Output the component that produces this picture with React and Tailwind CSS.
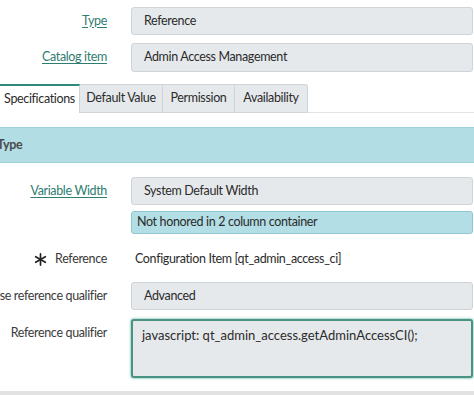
import React from "react";

const font = { fontFamily: '"Source Sans Pro", Lato, "Noto Sans", sans-serif' };

function Label({ children, link }) {
  return (
    <div className="w-[107px] shrink-0 flex justify-end whitespace-nowrap">
      <span
        className={
          link
            ? "text-[#2e7d71] underline underline-offset-2 decoration-[#2e7d71]"
            : "text-[#3a3a3a]"
        }
      >
        {children}
      </span>
    </div>
  );
}

function Input({ children, h = "h-[28px]" }) {
  return (
    <div
      className={`flex-1 ${h} ml-[24px] mr-[1px] rounded-[3px] border border-[#cfd4d8] bg-[#e6e9ec] flex items-center pl-[12px] text-[#2b2b2b]`}
    >
      {children}
    </div>
  );
}

export default function App() {
  return (
    <div
      className="w-[474px] h-[395px] overflow-hidden bg-white text-[12.5px] tracking-[-0.35px] relative"
      style={font}
    >
      <div className="flex flex-col">
        <div className="flex items-center mt-[7px]">
          <Label link>Type</Label>
          <Input>Reference</Input>
        </div>
        <div className="flex items-center mt-[8px]">
          <Label link>Catalog item</Label>
          <Input h="h-[29px]">Admin Access Management</Input>
        </div>

        {/* tabs */}
        <div className="flex mt-[12px] h-[29px] items-stretch">
          <div className="w-[80px] border-t-2 border-t-[#2f8a78] border-r border-r-[#cfd4d8] bg-white flex items-center justify-center text-[#2b2b2b]">
            Specifications
          </div>
          <div className="w-[83px] border-t border-t-[#cfd4d8] border-r border-r-[#cfd4d8] border-b border-b-[#d3d6d9] bg-[#e6e9ec] flex items-center justify-center text-[#2b2b2b]">
            Default Value
          </div>
          <div className="w-[72px] border-t border-t-[#cfd4d8] border-r border-r-[#cfd4d8] border-b border-b-[#d3d6d9] bg-[#e6e9ec] flex items-center justify-center text-[#2b2b2b]">
            Permission
          </div>
          <div className="w-[73px] border-t border-t-[#cfd4d8] border-r border-r-[#cfd4d8] border-b border-b-[#d3d6d9] bg-[#e6e9ec] rounded-tr-[3px] flex items-center justify-center text-[#2b2b2b]">
            Availability
          </div>
          <div className="flex-1 border-b border-b-[#e3e3e3]" />
        </div>

        {/* section header */}
        <div className="mt-[14px] h-[36px] bg-[#b2dde4] border-y border-[#9fd0d8] flex items-center">
          <span className="ml-[-3px] font-bold text-[#4a4a4a]">Type</span>
        </div>

        <div className="flex items-center mt-[14px]">
          <Label link>Variable Width</Label>
          <Input>System Default Width</Input>
        </div>
        <div className="flex mt-[6px]">
          <div className="w-[107px] shrink-0" />
          <div className="flex-1 ml-[24px] mr-[1px] h-[23px] rounded-[3px] border border-[#8fc8d1] bg-[#b3dee5] flex items-center pl-[5px] text-[#2b2b2b]">
            Not honored in 2 column container
          </div>
        </div>

        <div className="flex items-center mt-[16px] h-[18px]">
          <div className="w-[107px] shrink-0 flex justify-end items-center whitespace-nowrap text-[#3a3a3a]">
            <svg width="13" height="13" viewBox="0 0 14 14" className="mr-[8px]">
              <g stroke="#222" strokeWidth="1.8" strokeLinecap="round">
                <line x1="7" y1="1" x2="7" y2="13" />
                <line x1="1.8" y1="4" x2="12.2" y2="10" />
                <line x1="1.8" y1="10" x2="12.2" y2="4" />
              </g>
            </svg>
            <span>Reference</span>
          </div>
          <div className="ml-[28px] text-[#2b2b2b]">Configuration Item [qt_admin_access_ci]</div>
        </div>

        <div className="flex items-center mt-[14px]">
          <Label>Use reference qualifier</Label>
          <Input>Advanced</Input>
        </div>

        <div className="flex items-start mt-[9px]">
          <div className="w-[107px] shrink-0 flex justify-end whitespace-nowrap text-[#3a3a3a] pt-[5px]">
            Reference qualifier
          </div>
          <div className="flex-1 ml-[24px] mr-[1px] h-[59px] rounded-[3px] border-2 border-[#4a9384] shadow-[0_0_2px_1px_rgba(110,190,175,0.6)] bg-[#e6e9ec] pl-[9px] pt-[5px] text-[#2b2b2b] text-[13px] tracking-[0px]">
            javascript: qt_admin_access.getAdminAccessCI();
          </div>
        </div>
      </div>
      <div className="absolute left-0 right-0 bottom-0 h-[4px] bg-[#e2e2e2]" />
    </div>
  );
}
